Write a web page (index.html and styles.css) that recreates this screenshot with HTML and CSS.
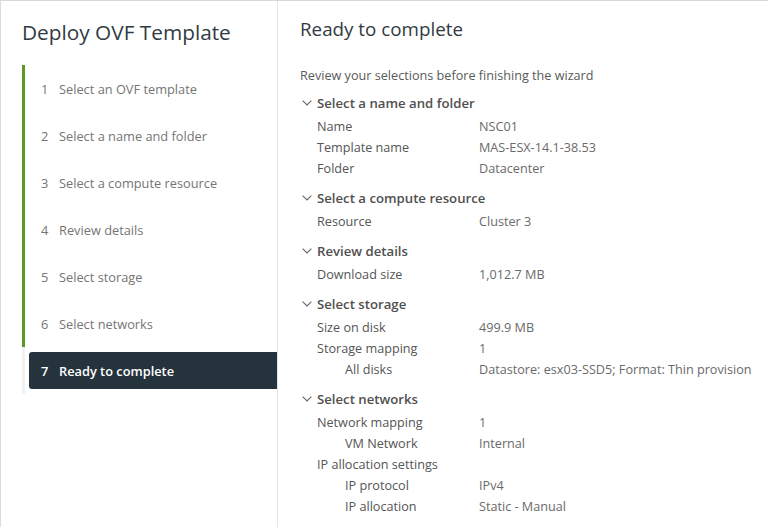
FILE: index.html
```html
<!DOCTYPE html>
<html>
<head>
<meta charset="utf-8">
<link rel="stylesheet" href="styles.css">
</head>
<body>
<div class="wizard">
  <aside class="sidebar">
    <h1 class="wiz-title">Deploy OVF Template</h1>
    <ol class="steps">
      <li class="step done"><span class="num">1</span><span class="lbl">Select an OVF template</span></li>
      <li class="step done"><span class="num">2</span><span class="lbl">Select a name and folder</span></li>
      <li class="step done"><span class="num">3</span><span class="lbl">Select a compute resource</span></li>
      <li class="step done"><span class="num">4</span><span class="lbl">Review details</span></li>
      <li class="step done"><span class="num">5</span><span class="lbl">Select storage</span></li>
      <li class="step done"><span class="num">6</span><span class="lbl">Select networks</span></li>
      <li class="step current"><div class="active-box"><span class="num">7</span><span class="lbl">Ready to complete</span></div></li>
    </ol>
  </aside>
  <main class="content">
    <h2 class="page-title">Ready to complete</h2>
    <p class="intro">Review your selections before finishing the wizard</p>

    <section class="group">
      <div class="group-head"><svg class="chev" width="10" height="6" viewBox="0 0 10 6"><polyline points="0.6,0.7 5,5 9.4,0.7" fill="none" stroke="#666" stroke-width="1.1"/></svg>Select a name and folder</div>
      <div class="row"><span class="k">Name</span><span class="v">NSC01</span></div>
      <div class="row"><span class="k">Template name</span><span class="v">MAS-ESX-14.1-38.53</span></div>
      <div class="row"><span class="k">Folder</span><span class="v">Datacenter</span></div>
    </section>

    <section class="group">
      <div class="group-head"><svg class="chev" width="10" height="6" viewBox="0 0 10 6"><polyline points="0.6,0.7 5,5 9.4,0.7" fill="none" stroke="#666" stroke-width="1.1"/></svg>Select a compute resource</div>
      <div class="row"><span class="k">Resource</span><span class="v">Cluster 3</span></div>
    </section>

    <section class="group">
      <div class="group-head"><svg class="chev" width="10" height="6" viewBox="0 0 10 6"><polyline points="0.6,0.7 5,5 9.4,0.7" fill="none" stroke="#666" stroke-width="1.1"/></svg>Review details</div>
      <div class="row"><span class="k">Download size</span><span class="v">1,012.7 MB</span></div>
    </section>

    <section class="group">
      <div class="group-head"><svg class="chev" width="10" height="6" viewBox="0 0 10 6"><polyline points="0.6,0.7 5,5 9.4,0.7" fill="none" stroke="#666" stroke-width="1.1"/></svg>Select storage</div>
      <div class="row"><span class="k">Size on disk</span><span class="v">499.9 MB</span></div>
      <div class="row"><span class="k">Storage mapping</span><span class="v">1</span></div>
      <div class="row sub"><span class="k">All disks</span><span class="v">Datastore: esx03-SSD5; Format: Thin provision</span></div>
    </section>

    <section class="group">
      <div class="group-head"><svg class="chev" width="10" height="6" viewBox="0 0 10 6"><polyline points="0.6,0.7 5,5 9.4,0.7" fill="none" stroke="#666" stroke-width="1.1"/></svg>Select networks</div>
      <div class="row"><span class="k">Network mapping</span><span class="v">1</span></div>
      <div class="row sub"><span class="k">VM Network</span><span class="v">Internal</span></div>
      <div class="row"><span class="k">IP allocation settings</span><span class="v"></span></div>
      <div class="row sub"><span class="k">IP protocol</span><span class="v">IPv4</span></div>
      <div class="row sub"><span class="k">IP allocation</span><span class="v">Static - Manual</span></div>
    </section>
  </main>
</div>
</body>
</html>
```
FILE: styles.css
```css
* { box-sizing: border-box; }
html, body { margin: 0; padding: 0; background: #fff; }
body {
  font-family: "Open Sans", Lato, sans-serif;
  color: #565656;
  width: 768px;
  height: 527px;
  overflow: hidden;
}
.wizard {
  display: flex;
  height: 527px;
  border-top: 1px solid #d6d9dc;
  border-left: 1px solid #dadcde;
}
.sidebar {
  width: 277px;
  flex: none;
  border-right: 1px solid #e3e5e7;
  padding-left: 21px;
}
.wiz-title {
  margin: 17px 0 0 0;
  font-size: 20.8px;
  line-height: 28px;
  font-weight: 400;
  color: #313a42;
}
.steps {
  list-style: none;
  margin: 19px 0 0 0;
  padding: 0;
}
.step {
  height: 47px;
  border-left: 3px solid #eff1f2;
  display: flex;
  align-items: center;
  font-size: 12.8px;
  color: #757575;
}
.step.done {
  border-left-color: #5a9a24;
  padding-left: 16px;
}
.step.current {
  padding: 5px 0 5px 4px;
  align-items: stretch;
}
.active-box {
  flex: 1;
  background: #25333d;
  border-radius: 3px 0 0 3px;
  display: flex;
  align-items: center;
  padding-left: 12px;
  color: #fff;
  font-weight: 600;
}
.num { display: inline-block; width: 18px; }
.content {
  flex: 1;
  padding-left: 22px;
}
.page-title {
  margin: 16px 0 0 0;
  font-size: 18.8px;
  line-height: 24px;
  font-weight: 400;
  color: #313a42;
}
.intro {
  margin: 25px 0 9px 0;
  font-size: 12.65px;
  line-height: 18px;
  color: #5a5a5a;
}
.group { margin-bottom: 9.5px; }
.group-head {
  display: flex;
  align-items: center;
  height: 20px;
  margin-bottom: 2.5px;
  font-size: 13.2px;
  font-weight: 600;
  color: #505050;
}
.chev { margin: 0 5px 0 2px; }
.row {
  display: flex;
  height: 21px;
  align-items: center;
  font-size: 12.65px;
  padding-left: 17px;
}
.row .k { width: 162px; flex: none; color: #555; }
.row.sub .k { padding-left: 28px; }
.row .v { color: #6a6a6a; white-space: nowrap; }
```
